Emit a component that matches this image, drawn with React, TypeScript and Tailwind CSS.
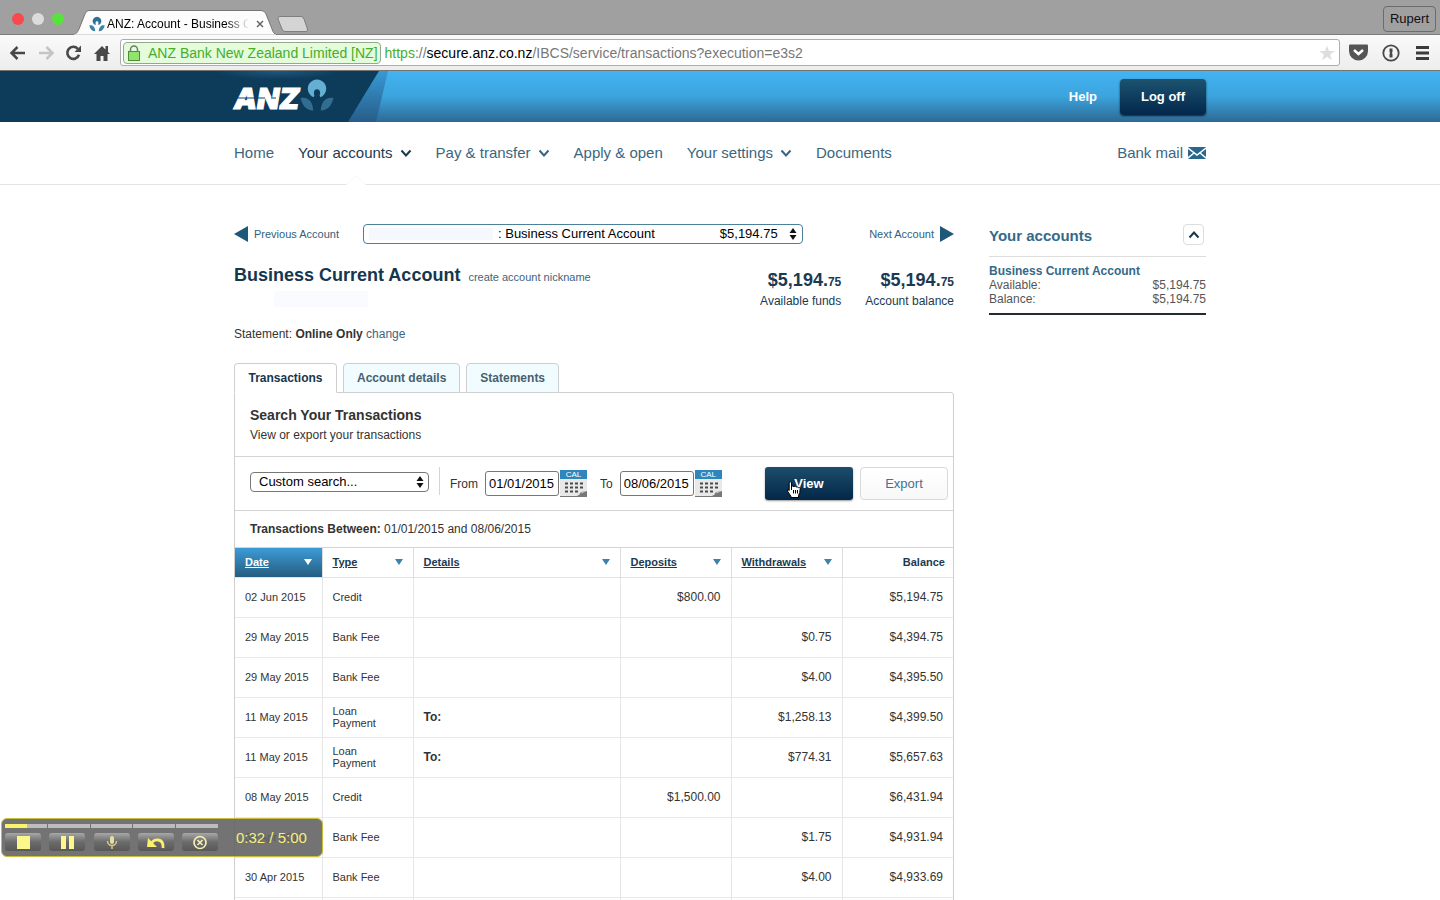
import React from 'react';

const rows = [
  { date: '02 Jun 2015', type: 'Credit', details: '', deposit: '$800.00', withdrawal: '', balance: '$5,194.75' },
  { date: '29 May 2015', type: 'Bank Fee', details: '', deposit: '', withdrawal: '$0.75', balance: '$4,394.75' },
  { date: '29 May 2015', type: 'Bank Fee', details: '', deposit: '', withdrawal: '$4.00', balance: '$4,395.50' },
  { date: '11 May 2015', type: 'Loan Payment', details: 'To:', deposit: '', withdrawal: '$1,258.13', balance: '$4,399.50' },
  { date: '11 May 2015', type: 'Loan Payment', details: 'To:', deposit: '', withdrawal: '$774.31', balance: '$5,657.63' },
  { date: '08 May 2015', type: 'Credit', details: '', deposit: '$1,500.00', withdrawal: '', balance: '$6,431.94' },
  { date: '30 Apr 2015', type: 'Bank Fee', details: '', deposit: '', withdrawal: '$1.75', balance: '$4,931.94' },
  { date: '30 Apr 2015', type: 'Bank Fee', details: '', deposit: '', withdrawal: '$4.00', balance: '$4,933.69' },
  { date: '', type: '', details: '', deposit: '', withdrawal: '', balance: '' },
];

const columns = [
  { label: 'Date', width: 'w-[87px]' },
  { label: 'Type', width: 'w-[91px]' },
  { label: 'Details', width: '' },
  { label: 'Deposits', width: 'w-[111px]' },
  { label: 'Withdrawals', width: 'w-[111px]' },
];

const navItems = [
  { label: 'Home', menu: false },
  { label: 'Your accounts', menu: true },
  { label: 'Pay & transfer', menu: true },
  { label: 'Apply & open', menu: false },
  { label: 'Your settings', menu: true },
  { label: 'Documents', menu: false },
];

const gap = '\u00a0'.repeat(18);

const Lotus: React.FC<{ className: string; top: string; bottom: string }> = ({ className, top, bottom }) => (
  <svg viewBox="0 0 34 32" className={className} aria-hidden="true">
    <path d="M13.5 18.2A9.2 9.2 0 1 1 20.5 18.2L19.6 16.4C21 13 19.6 10.2 17 10.2S13 13 14.4 16.4Z" fill={top} />
    <path d="M0.5 19C7 17.6 12.6 21 13.2 31.4C6.500 31.500 2.500 27 0.500 19Z" fill={bottom} />
    <path d="M33.5 19C27 17.6 21.400 21 20.800 31.400C27.500 31.500 31.500 27 33.500 19Z" fill={bottom} />
  </svg>
);

const UpDown: React.FC<{ className: string }> = ({ className }) => (
  <svg width="8" height="12" viewBox="0 0 8 12" className={className} aria-hidden="true">
    <path d="M4 0L7.500 5H0.500ZM4 12L7.500 7H0.500Z" fill="#111" />
  </svg>
);

const Chevron: React.FC<{ up?: boolean }> = ({ up }) => (
  <svg width="12" height="12" viewBox="0 0 12 12" fill="none" stroke="currentColor" strokeWidth="2" aria-hidden="true">
    <path d={up ? 'M1.500 8.500L6 3.500L10.500 8.500' : 'M1.500 3.500L6 8.500L10.500 3.500'} />
  </svg>
);

const BrowserBar = () => (
  <div className="shrink-0">
    <div className="flex h-[35px] items-end border-b border-[#7c7c7c] bg-[#a0a0a0]">
      <div className="flex items-center gap-2 self-center pt-1 pl-3">
        <span className="size-3 rounded-full bg-[#f9484e]" />
        <span className="size-3 rounded-full bg-[#dcdcdc]" />
        <span className="size-3 rounded-full bg-[#57e33c]" />
      </div>
      <div className="relative ml-[9px] h-6 w-[208px]">
        <svg viewBox="0 0 208 25" className="absolute inset-0 h-[25px] w-[208px]" aria-hidden="true">
          <path d="M0 25C4 24 5 21 6 19L12 4Q13 0.500 16 0.500H188Q192 0.500 193 4L199 19C200 22 201 24 204 25Z" fill="#fcfcfc" stroke="#767676" />
          <path d="M1 25H203" stroke="#fcfcfc" />
        </svg>
        <div className="relative flex h-6 items-center pt-1 pl-4">
          <Lotus className="h-4 w-4 shrink-0" top="#2d6f96" bottom="#3d82a8" />
          <span className="ml-0.5 w-[142px] overflow-hidden text-[12px] whitespace-nowrap text-black [mask-image:linear-gradient(to_right,black_120px,transparent)]">ANZ: Account - Business C</span>
          <button aria-label="Close tab" className="ml-[7px]">
            <svg width="8" height="8" viewBox="0 0 8 8" stroke="#666" strokeWidth="1.5" aria-hidden="true"><path d="M1 1L7 7M7 1L1 7" /></svg>
          </button>
        </div>
      </div>
      <button aria-label="New tab" className="-ml-1 mb-0.5">
        <svg width="32" height="16" viewBox="0 0 32 16" aria-hidden="true">
          <path d="M3 0.500H24Q26 0.500 27 3L30.500 13Q31 15.500 29 15.500H8Q6 15.500 5 13L1 3Q0.500 0.500 3 0.500Z" fill="#d4d4d4" stroke="#7e7e7e" />
        </svg>
      </button>
      <button className="mr-1 mb-0.5 ml-auto h-[26px] rounded-sm border border-[#6c6c6c] px-1.5 text-[13px] text-[#111]">Rupert</button>
    </div>
    <div className="flex h-9 items-center border-b border-[#757575] bg-gradient-to-b from-[#fafafa] to-[#ededed] text-[#484848]">
      <button aria-label="Back" className="ml-[9px]">
        <svg width="17" height="14" viewBox="0 0 17 14" fill="none" stroke="currentColor" strokeWidth="2.500" aria-hidden="true"><path d="M16 7H2.500M8.500 1L2.500 7L8.500 13" /></svg>
      </button>
      <button aria-label="Forward" className="ml-3 text-[#c4c4c4]">
        <svg width="17" height="14" viewBox="0 0 17 14" fill="none" stroke="currentColor" strokeWidth="2.500" aria-hidden="true"><path d="M1 7H14.500M8.500 1L14.500 7L8.500 13" /></svg>
      </button>
      <button aria-label="Reload" className="ml-[10px]">
        <svg width="17" height="16" viewBox="0 0 17 16" aria-hidden="true">
          <path d="M12.800 3.800A6 6 0 1 0 14 9.800" fill="none" stroke="currentColor" strokeWidth="2.600" />
          <path d="M16 0.500V7H9.500Z" fill="currentColor" />
        </svg>
      </button>
      <button aria-label="Home page" className="ml-3">
        <svg width="16" height="16" viewBox="0 0 16 16" fill="currentColor" aria-hidden="true"><path d="M8 1L11.500 4.500V1H14V7L16 9H13.500V16H9.500V11H6.500V16H2.500V9H0Z" /></svg>
      </button>
      <div className="ml-[10px] flex h-[27px] min-w-0 flex-1 items-center rounded-[3px] border border-[#adadad] bg-white pr-1">
        <div className="ml-0.5 flex h-[22px] shrink-0 items-center rounded-sm border border-[#92a98c] bg-[#e4fbdc] pr-0.5 pl-1 text-[14px] text-[#46ae2a]">
          <svg width="12" height="16" viewBox="0 0 12 16" className="mr-2" aria-hidden="true">
            <path d="M2.500 7V4.500A3.500 3.500 0 0 1 9.500 4.500V7" fill="none" stroke="#6f7d6a" strokeWidth="1.500" />
            <rect x="0.500" y="6.500" width="11" height="9" fill="#8fe56b" stroke="#4c8f36" />
          </svg>
          <span className="pt-0.5">ANZ Bank New Zealand Limited [NZ]</span>
        </div>
        <div className="ml-1 min-w-0 flex-1 truncate pt-0.5 text-[14px] text-[#777]">
          <span className="text-[#46ae2a]">https</span>://<span className="text-black">secure.anz.co.nz</span>/IBCS/service/transactions?execution=e3s2
        </div>
        <button aria-label="Bookmark">
          <svg width="16" height="16" viewBox="0 0 16 16" fill="#dedede" aria-hidden="true"><path d="M8 0.500L10 6H15.800L11.200 9.500L12.900 15.200L8 11.800L3.100 15.200L4.800 9.500L0.200 6H6Z" /></svg>
        </button>
      </div>
      <button aria-label="Pocket" className="ml-[9px]">
        <svg width="19" height="17" viewBox="0 0 19 17" aria-hidden="true">
          <path d="M1 0.500H18Q19 0.500 19 1.500V7A9.500 9.500 0 0 1 0 7V1.500Q0 0.500 1 0.500Z" fill="#555" />
          <path d="M5 6L9.500 10L14 6" fill="none" stroke="#fff" strokeWidth="2.500" />
        </svg>
      </button>
      <button aria-label="Passwords" className="ml-[14px]">
        <svg width="18" height="18" viewBox="0 0 18 18" aria-hidden="true">
          <circle cx="9" cy="9" r="7.700" fill="none" stroke="#484848" strokeWidth="1.800" />
          <path d="M7.500 4.500H10.500V8L9.800 9L10.500 10V13.500H7.500V10L8.200 9L7.500 8Z" fill="#484848" />
        </svg>
      </button>
      <button aria-label="Menu" className="mr-[11px] ml-4">
        <svg width="13" height="14" viewBox="0 0 13 14" fill="#3c3c3c" aria-hidden="true"><path d="M0 0H13V3H0ZM0 5.500H13V8.500H0ZM0 11H13V14H0Z" /></svg>
      </button>
    </div>
  </div>
);

const SiteHeader = () => (
  <header className="relative shrink-0 bg-gradient-to-b from-[#42b4f3] via-[#3ca3dd] to-[#2c6a94]">
    {/* dark slanted panel behind the logo */}
    <div className="absolute inset-y-0 left-0 w-[388px]">
      <svg viewBox="0 0 388 51" className="h-full w-full" preserveAspectRatio="none" aria-hidden="true">
        <defs>
          <linearGradient id="slant" x1="0" y1="0" x2="0" y2="1">
            <stop offset="0" stopColor="#3899d4" />
            <stop offset="1" stopColor="#275d88" />
          </linearGradient>
          <radialGradient id="glow" cx="0.730" cy="0" r="0.170">
            <stop offset="0" stopColor="#1e587c" />
            <stop offset="1" stopColor="#0d3b5a" />
          </radialGradient>
        </defs>
        <path d="M379 0H388L376 51H348Z" fill="url(#slant)" />
        <path d="M0 0H379L348 51H0Z" fill="url(#glow)" />
      </svg>
    </div>
    <div className="relative mx-auto flex h-[51px] w-full max-w-[972px] items-center">
      <a href="#home" aria-label="ANZ home" className="relative flex items-center text-white">
        <span className="pt-1 font-[Inter,sans-serif] text-[29px] leading-none font-black italic [-webkit-text-stroke:1px_white]">ANZ</span>
        {/* cut through the middle of the wordmark */}
        <svg viewBox="0 0 64 2" className="absolute top-[18px] left-0 h-0.5 w-16" aria-hidden="true"><path d="M4 1H31M37 1H42" stroke="#0f4263" /></svg>
        <Lotus className="mb-1 h-8 w-[34px]" top="#64afd3" bottom="#326d91" />
      </a>
      <a href="#help" className="ml-auto text-[13px] font-bold text-white">Help</a>
      <button className="ml-[23px] h-9 w-[86px] rounded-sm bg-gradient-to-b from-[#1d5470] to-[#04274c] text-[13px] font-bold text-white shadow-[0_1px_2px_#123]">Log off</button>
    </div>
  </header>
);

const MainNav = () => (
  <nav className="shrink-0 border-b border-[#e4e4e4] bg-white">
    <div className="mx-auto flex h-[62px] max-w-[972px] items-center gap-6 text-[15px] text-[#3b6680]">
      {navItems.map((item) => (
        <a key={item.label} href="#nav" className={item.label === 'Your accounts' ? 'relative flex h-full items-center gap-[7px] text-[#1c3a50]' : 'flex items-center gap-[7px]'}>
          {item.label}
          {item.menu && <Chevron />}
          {item.label === 'Your accounts' && (
            <svg width="20" height="10" viewBox="0 0 20 10" className="absolute -bottom-px left-12" aria-hidden="true">
              <path d="M0 10L10 1L20 10Z" fill="#fff" />
              <path d="M1 9L10 1L19 9" fill="none" stroke="#f8f8f8" />
            </svg>
          )}
        </a>
      ))}
      <a href="#mail" className="ml-auto flex items-center gap-[5px]">
        Bank mail
        <svg width="18" height="12" viewBox="0 0 18 12" aria-hidden="true">
          <rect width="18" height="12" rx="1" fill="#28688f" />
          <path d="M0 1L9 8L18 1M0 11L6 6M18 11L12 6" fill="none" stroke="#fff" strokeWidth="1.500" />
        </svg>
      </a>
    </div>
  </nav>
);

const DateField: React.FC<{ id: string; label: string; value: string }> = ({ id, label, value }) => (
  <div className="flex items-center">
    <label htmlFor={id} className="text-[12px]">{label}</label>
    <input id={id} type="text" defaultValue={value} className="ml-[7px] h-[25px] w-[74px] rounded-[3px] border border-[#777] bg-white px-[3px] text-[13px] text-black" />
    <button type="button" aria-label={`Pick ${label} date`} className="ml-px flex h-[27px] w-[27px] flex-col bg-[#e8e8e8]">
      <span className="h-[9px] w-full bg-[#2f86bd] text-[8px] leading-[9px] text-white">CAL</span>
      <svg width="27" height="18" viewBox="0 0 27 18" aria-hidden="true">
        <path d="M5 4.500H23M5 8.500H23M5 12.500H20" stroke="#4a4a4a" strokeWidth="2" strokeDasharray="3 2" />
        <path d="M13 18C20 17 19 15 21 13L27 12V18Z" fill="#777" />
        <path d="M17 16C20 16 21 14 22 13L27 12Z" fill="#ddd" />
        <path d="M0 17.500H27" stroke="#777" />
      </svg>
    </button>
  </div>
);

const TransactionTable = () => (
  <table className="w-full table-fixed border-collapse text-left">
    <thead>
      <tr className="h-[29px] border-b border-[#e2e2e2] text-[11px] font-bold text-[#1b3a52]">
        {columns.map((col, i) => (
          <th key={col.label} className={`${col.width} border-r border-[#ddd] p-0 ${i === 0 ? 'bg-gradient-to-b from-[#3d9cd8] to-[#255d81] text-white' : ''}`}>
            <div className="flex items-center justify-between px-2.5">
              <a href="#sort" className="underline">{col.label}</a>
              <svg width="8" height="6" viewBox="0 0 8 6" aria-hidden="true"><path d="M0 0H8L4 6Z" fill={i === 0 ? '#fff' : '#3c82ab'} /></svg>
            </div>
          </th>
        ))}
        <th className="w-[111px] py-0 pr-2 pl-0 text-right">Balance</th>
      </tr>
    </thead>
    <tbody>
      {rows.map((row, i) => (
        <tr key={i} className="h-10 border-b border-[#e9e9e9] text-[12px]">
          <td className="border-r border-[#e6e6e6] px-2.5 py-0 text-[11px] leading-3">{row.date}</td>
          <td className="border-r border-[#e6e6e6] px-2.5 py-0 text-[11px] leading-3">{row.type}</td>
          <td className="border-r border-[#e6e6e6] px-2.5 py-0 font-bold">{row.details}</td>
          <td className="border-r border-[#e6e6e6] px-2.5 py-0 text-right">{row.deposit}</td>
          <td className="border-r border-[#e6e6e6] px-2.5 py-0 text-right">{row.withdrawal}</td>
          <td className="px-2.5 py-0 text-right">{row.balance}</td>
        </tr>
      ))}
    </tbody>
  </table>
);

const SearchPanel = () => (
  <section className="rounded-tr-[3px] border border-[#cfcfcf]">
    <div className="h-[63px] px-[15px] pt-3">
      <h2 className="text-[14px] leading-5 font-bold">Search Your Transactions</h2>
      <p className="text-[12px] leading-5">View or export your transactions</p>
    </div>
    <form className="flex h-[55px] items-center border-y border-[#d4d4d4] pr-[5px] pl-[15px]">
      <div className="relative mb-1 w-[179px]">
        <select aria-label="Search type" className="block h-5 w-full appearance-none rounded-[4px] border border-[#777] bg-white pr-5 pl-2 text-[13px] leading-[18px] text-black">
          <option>Custom search...</option>
        </select>
        <UpDown className="pointer-events-none absolute top-1 right-[5px]" />
      </div>
      <div className="mb-1.5 ml-2.5 h-7 w-px bg-[#d4d4d4]" />
      <div className="ml-2.5 flex gap-[13px]">
        <DateField id="from" label="From" value="01/01/2015" />
        <DateField id="to" label="To" value="08/06/2015" />
      </div>
      <button type="button" className="relative ml-auto h-[33px] w-[88px] rounded-[3px] bg-gradient-to-b from-[#1c4e6c] to-[#052748] text-[13px] font-bold text-white shadow-[0_1px_2px_#999]">
        View
        <svg width="14" height="17" viewBox="0 0 14 17" className="absolute top-[14px] left-[22px]" aria-hidden="true">
          <path d="M4.500 9V2Q4.500 0.700 3.300 0.700T2.200 2V9.500L1.500 9Q0 8.500 0.600 10.200L4 15.500V16.500H11.500V14.500Q13.200 12 13.200 7.500Q12.700 6 11.500 6.800Q11 5.500 9.300 6Q8.700 4.800 7 5.500Q5.500 4.500 4.500 5.500" fill="#fff" stroke="#000" />
          <path d="M6.500 9V12.500M8.500 9V12.500M10.500 9V12.500" stroke="#000" />
        </svg>
      </button>
      <button type="button" className="ml-[7px] h-[33px] w-[88px] rounded-[4px] border border-[#d9d9d9] bg-gradient-to-b from-white to-[#f8f8f8] text-[13px] text-[#3b7497]">Export</button>
    </form>
    <p className="border-b border-[#d4d4d4] px-[15px] text-[12px] leading-9"><b>Transactions Between:</b> 01/01/2015 and 08/06/2015</p>
    <TransactionTable />
  </section>
);

const Amount: React.FC<{ label: string }> = ({ label }) => (
  <div className="text-right text-[12px] leading-4 text-[#1b3a52]">
    <div className="text-[18px] leading-[22px] font-bold">$5,194.<span className="text-[12px]">75</span></div>
    {label}
  </div>
);

const AccountColumn = () => (
  <main className="min-w-0 flex-1">
    <div className="flex items-center text-[11px] text-[#33607c]">
      <a href="#prev" className="flex items-center gap-[6px]">
        <svg width="14" height="16" viewBox="0 0 14 16" aria-hidden="true"><path d="M14 0V16L0 8Z" fill="#1d577a" /></svg>
        Previous Account
      </a>
      <div className="relative ml-6 w-[440px]">
        <select aria-label="Account" className="block h-5 w-full appearance-none rounded-[4px] border border-[#4c8199] bg-white pr-5 pl-[134px] text-[13px] leading-[18px] text-black">
          <option>{`: Business Current Account${gap}$5,194.75`}</option>
        </select>
        <span className="pointer-events-none absolute top-1 left-1.5 h-3 w-[124px] bg-[#f5f9ff]" />
        <UpDown className="pointer-events-none absolute top-1 right-[6px]" />
      </div>
      <a href="#next" className="ml-auto flex items-center gap-[6px]">
        Next Account
        <svg width="14" height="16" viewBox="0 0 14 16" aria-hidden="true"><path d="M0 0V16L14 8Z" fill="#1d577a" /></svg>
      </a>
    </div>
    <div className="mt-[19px] flex justify-between">
      <div>
        <div className="flex items-baseline gap-2">
          <h1 className="text-[18px] leading-6 font-bold text-[#16364d]">Business Current Account</h1>
          <a href="#nickname" className="text-[11px] text-[#3d6480]">create account nickname</a>
        </div>
        <div className="mt-1 ml-10 h-4 w-[94px] bg-[#fafbff]" />
      </div>
      <div className="mt-[6px] flex gap-6">
        <Amount label="Available funds" />
        <Amount label="Account balance" />
      </div>
    </div>
    <p className="mt-[15px] text-[12px] leading-5">Statement: <b>Online Only</b> <a href="#change" className="text-[#3d6480]">change</a></p>
    <div role="tablist" className="relative mt-[19px] -mb-px flex gap-1.5 text-[12px] leading-7 font-bold">
      <button role="tab" aria-selected="true" className="h-[30px] w-[103px] rounded-t-[4px] border border-[#cfcfcf] border-b-white bg-white text-[#16364d]">Transactions</button>
      <button role="tab" className="h-[30px] rounded-t-[4px] border border-[#cfcfcf] bg-[#f0fcff] px-[13px] text-[#48606f]">Account details</button>
      <button role="tab" className="h-[30px] rounded-t-[4px] border border-[#cfcfcf] bg-[#f0fcff] px-[13px] text-[#48606f]">Statements</button>
    </div>
    <SearchPanel />
  </main>
);

const Sidebar = () => (
  <aside className="w-[217px] shrink-0 text-[12px] leading-[14px]">
    <div className="flex h-[33px] items-start justify-between border-b border-[#ddd] pr-0.5">
      <h2 className="mt-0.5 text-[15px] leading-5 font-bold text-[#35698a]">Your accounts</h2>
      <button aria-label="Collapse" className="flex size-[21px] items-center justify-center rounded-sm border border-[#ddd] text-[#16364d]"><Chevron up /></button>
    </div>
    <div className="border-b-2 border-[#222c33] pt-[7px] pb-[7px] text-[#555]">
      <a href="#account" className="block font-bold text-[#35698a]">Business Current Account</a>
      <div className="flex justify-between">Available: <span>$5,194.75</span></div>
      <div className="flex justify-between">Balance: <span>$5,194.75</span></div>
    </div>
  </aside>
);

const recorderButtons = [
  { label: 'Stop', icon: <path d="M4 1H17V14H4Z" fill="#fbf78a" /> },
  { label: 'Pause', icon: <path d="M4 1H9V14H4ZM12 1H17V14H12Z" fill="#fbf78a" /> },
  { label: 'Microphone', icon: <><rect x="8" y="1" width="4" height="8" rx="2" fill="#e6dda0" /><path d="M5.500 6A4.500 4.500 0 0 0 14.500 6M10 11V14" fill="none" stroke="#d5ca86" strokeWidth="1.500" /></> },
  { label: 'Undo', icon: <><path d="M5 9C8 3 18 3 17 13" fill="none" stroke="#fbee70" strokeWidth="2.800" /><path d="M2 3L1 12L11 12Z" fill="#fbee70" /></> },
  { label: 'Cancel', icon: <g fill="none" stroke="#f6eeb4" strokeWidth="1.700"><circle cx="10" cy="7.500" r="6" /><path d="M7.500 5L12.500 10M12.500 5L7.500 10" /></g> },
];

// screen recorder strip floating over the page
const Recorder = () => (
  <div className="absolute top-[818px] left-px flex h-[39px] w-[322px] rounded-md border border-[#c7bf3c] bg-[#606060]/88">
    <div className="w-[216px] pt-[5px] pl-[3px]">
      <div className="flex gap-px">
        {recorderButtons.map((b, i) => (
          <div key={b.label} className="h-1 flex-1 bg-[#bdbdbd]">{i === 0 && <div className="h-1 w-[22px] bg-[#fbf36a]" />}</div>
        ))}
      </div>
      <div className="mt-[5px] flex justify-between">
        {recorderButtons.map((b) => (
          <button key={b.label} aria-label={b.label} className="flex h-[18px] w-9 items-center justify-center rounded-[3px] bg-gradient-to-b from-[#a8a8a8] via-[#6b6b6b] to-[#585858]">
            <svg width="20" height="15" viewBox="0 0 20 15" aria-hidden="true">{b.icon}</svg>
          </button>
        ))}
      </div>
    </div>
    <span className="ml-[18px] self-center pt-0.5 text-[15px] text-[#f6ef7b]">0:32 / 5:00</span>
  </div>
);

export default function App() {
  return (
    <div className="relative flex h-screen flex-col overflow-hidden bg-white font-['Liberation_Sans',Arial,sans-serif] text-[#333]">
      <BrowserBar />
      <SiteHeader />
      <MainNav />
      <div className="mx-auto flex w-full max-w-[972px] gap-[35px] pt-[39px]">
        <AccountColumn />
        <Sidebar />
      </div>
      <Recorder />
    </div>
  );
}
